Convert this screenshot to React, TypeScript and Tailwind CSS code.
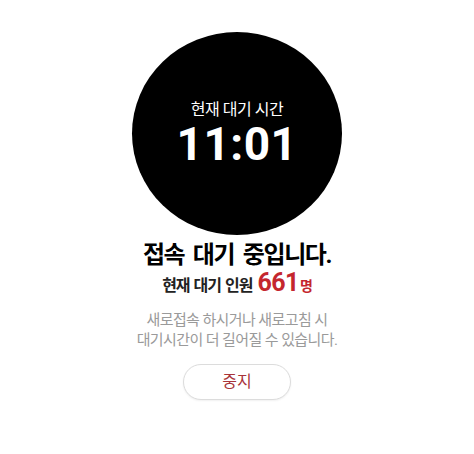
export default function App() {
  return (
    <div
      className="w-full min-h-screen bg-white flex flex-col items-center pt-8"
      style={{ fontFamily: '"Roboto", "Noto Sans CJK KR", sans-serif' }}
    >
      {/* 대기 시간 원 */}
      <div className="w-[210px] h-[203px] pt-[4px] rounded-[50%] bg-black flex flex-col items-center justify-center text-white">
        <p className="text-[16px] leading-[16px] tracking-[-0.5px]">현재 대기 시간</p>
        <p className="text-[46px] leading-[52px] font-bold tracking-[0.5px]">11:01</p>
      </div>

      <h1 className="mt-[5px] text-[24px] leading-[30px] font-bold tracking-[-1.4px] [word-spacing:4px] text-black">
        접속 대기 중입니다.
      </h1>
      <p className="flex items-baseline text-[16px] leading-[26px] font-bold tracking-[-1px] text-[#222]">
        <span className="[word-spacing:1px]">현재 대기 인원</span>
        <span className="ml-[5px] text-[25px] text-[#c4262e] tracking-[-0.5px]">661</span>
        <span className="ml-[1px] text-[14px] text-[#c4262e]">명</span>
      </p>

      <p className="mt-[11px] text-center text-[15px] leading-[20px] tracking-[-0.6px] text-[#9a9a9a]">
        새로접속 하시거나 새로고침 시
        <br />
        대기시간이 더 길어질 수 있습니다.
      </p>

      <button className="mt-[14px] w-[108px] h-[36px] rounded-full border border-[#dcdcdc] bg-white shadow-[0_1px_2px_rgba(0,0,0,0.06)] text-[16px] text-[#a8343a]">
        중지
      </button>
    </div>
  )
}
